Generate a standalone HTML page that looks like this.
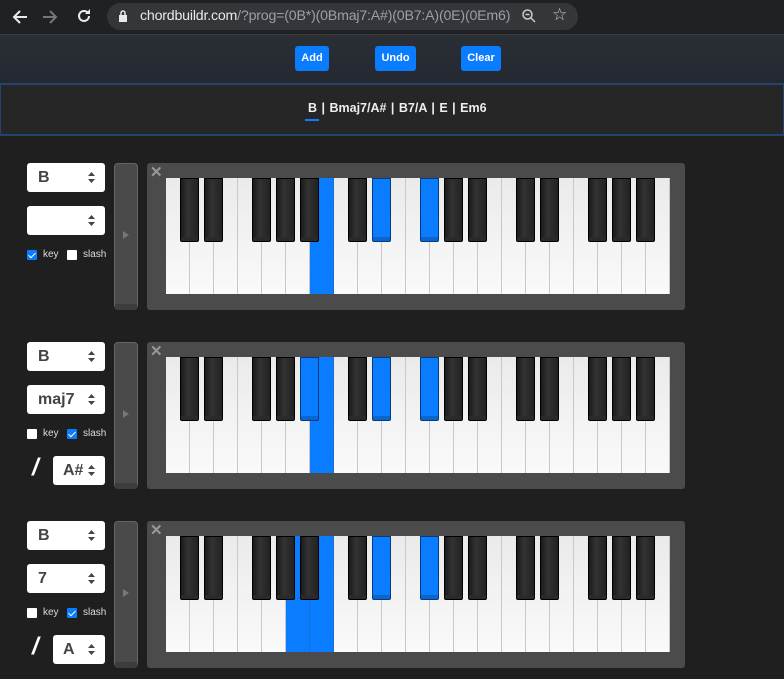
<!DOCTYPE html>
<html><head><meta charset="utf-8"><style>
*{box-sizing:border-box;margin:0;padding:0}
body{width:784px;height:679px;overflow:hidden;background:#1f1f1f;font-family:"Liberation Sans",sans-serif;position:relative}
.abs{position:absolute}
.chrome{left:0;top:0;width:784px;height:35px;background:#202124;border-bottom:1px solid #3c3c3c}
.url{left:107px;top:3px;width:471px;height:27px;border-radius:14px;background:#35363a;color:#e8eaed;font-size:14.2px;line-height:27px;padding-left:33px;letter-spacing:-0.2px}
.url span{color:#9aa0a6}
.hdr{left:0;top:35px;width:784px;height:48px;background:linear-gradient(#2a2f36,#242830)}
.btn{top:46px;height:25px;background:#0a7cff;color:#fff;font-size:11px;font-weight:bold;border-radius:3px;text-align:center;line-height:25px}
.strip{left:0;top:83px;width:784px;height:53px;background:#262626;border:2px solid #22446e;border-left:1px solid #22446e;border-right:1px solid #22446e}
.prog{left:308px;top:101px;color:#eee;font-size:12.5px;font-weight:bold;word-spacing:1px}
.sel{width:78px;height:29px;background:#fff;border-radius:3px;color:#444;font-size:16px;font-weight:bold;line-height:29px;padding-left:11px}
.sel svg{position:absolute;right:10px;top:9px}
.cb{width:10px;height:10px;background:#fff;border-radius:1px}
.cb.on{background:#0a7cff}
.cb.on:after{content:"";position:absolute;left:3px;top:1px;width:3px;height:6px;border:solid #fff;border-width:0 1.5px 1.5px 0;transform:rotate(45deg)}
.lbl{color:#ddd;font-size:10px}
.side{width:24px;height:147px;background:#4a4a4a;border:1px solid #666;border-radius:4px;border-bottom:6px solid #3d3d3d}
.side:after{content:"";position:absolute;left:8px;top:67px;border:4px solid transparent;border-left:6px solid #777}
.panel{width:538px;height:147px;background:#4b4b4b;border-radius:3px}
.x{color:#999;font-size:15px;font-weight:bold;left:3px;top:0px}
.kb{left:19px;top:15px;width:504px;height:116px;background:#f4f4f4;border-radius:0 0 3px 3px}
.w{top:0;width:24px;height:116px;background:linear-gradient(#eaeaea,#fafafa);border-right:1px solid #c8c8c8}
.w.hl{background:#0a7cff;border-right:1px solid #1a6fd0}
.b{top:0;width:19px;height:64px;background:linear-gradient(90deg,#1a1a1a,#333 40%,#222);border:1px solid #000;border-radius:0 0 2px 2px;box-shadow:inset 0 -4px 0 #2a2a2a}
.b.hl{background:#0a7cff;border-color:#063a7a;box-shadow:inset 0 -4px 0 #0866cc}
.slash{color:#fff;font-size:24px;font-weight:bold;font-style:italic}
</style></head><body>
<div class="abs chrome">
<svg class="abs" style="left:10px;top:8px" width="20" height="18" viewBox="0 0 20 18"><path d="M17 9H4M10 3L4 9l6 6" stroke="#e8eaed" stroke-width="2" fill="none"/></svg>
<svg class="abs" style="left:40px;top:8px" width="20" height="18" viewBox="0 0 20 18"><path d="M3 9h13M10 3l6 6-6 6" stroke="#75777a" stroke-width="2" fill="none"/></svg>
<svg class="abs" style="left:75px;top:7px" width="18" height="18" viewBox="0 0 18 18"><path d="M14 9a5 5 0 1 1-1.5-3.6" stroke="#e8eaed" stroke-width="2" fill="none"/><path d="M15 2v5h-5z" fill="#e8eaed"/></svg>
<div class="abs url">chordbuildr.com<span>/?prog=(0B*)(0Bmaj7:A#)(0B7:A)(0E)(0Em6)</span></div>
<svg class="abs" style="left:118px;top:10px" width="10" height="13" viewBox="0 0 10 13"><rect x="1" y="5" width="8" height="7" fill="#e8eaed"/><path d="M3 5V3a2 2 0 0 1 4 0v2" stroke="#e8eaed" stroke-width="1.5" fill="none"/></svg>
<svg class="abs" style="left:453px;top:8px;left:453px;display:none" width="1" height="1"></svg>
<svg class="abs" style="left:452px;top:8px;display:none" width="1" height="1"></svg>
<svg class="abs" style="left:453px;top:8px;display:none" width="1" height="1"></svg>
<svg class="abs" style="left:453px;top:8px;display:none" width="1" height="1"></svg>
<svg class="abs" style="left:453px;top:8px;display:none" width="1" height="1"></svg>
<svg class="abs" style="left:521px;top:8px" width="16" height="16" viewBox="0 0 16 16"><circle cx="6.5" cy="6.5" r="4.5" stroke="#ccc" stroke-width="1.5" fill="none"/><path d="M10 10l4 4M4.5 6.5h4" stroke="#ccc" stroke-width="1.5"/></svg>
<div class="abs" style="left:552px;top:5px;color:#ccc;font-size:17px">☆</div>
</div>
<div class="abs hdr"></div>
<div class="abs btn" style="left:295px;width:34px">Add</div>
<div class="abs btn" style="left:375px;width:41px">Undo</div>
<div class="abs btn" style="left:461px;width:40px">Clear</div>
<div class="abs strip"></div>
<div class="abs prog">B | Bmaj7/A# | B7/A | E | Em6</div>
<div class="abs" style="left:305px;top:119px;width:14px;height:2px;background:#0a7cff"></div>
<div id="rows"></div>
<script>
var rows=[
 {q:"",key:1,sl:0,bass:null,hw:[6],hb:[6,7]},
 {q:"maj7",key:0,sl:1,bass:"A#",hw:[6],hb:[4,6,7]},
 {q:"7",key:0,sl:1,bass:"A",hw:[5,6],hb:[6,7]}
];
var arr='<svg width="7" height="11" viewBox="0 0 7 11"><path d="M3.5 0L7 4H0z M3.5 11L7 7H0z" fill="#444"/></svg>';
var bo=[14,38,86,110,134];var h="";
rows.forEach(function(r,i){var y=163+i*179;
h+='<div class="abs sel" style="left:27px;top:'+y+'px">B'+arr+'</div>';
h+='<div class="abs sel" style="left:27px;top:'+(y+43)+'px">'+r.q+arr+'</div>';
h+='<div class="abs cb'+(r.key?' on':'')+'" style="left:27px;top:'+(y+87)+'px"></div><div class="abs lbl" style="left:43px;top:'+(y+86)+'px">key</div>';
h+='<div class="abs cb'+(r.sl?' on':'')+'" style="left:67px;top:'+(y+87)+'px"></div><div class="abs lbl" style="left:83px;top:'+(y+86)+'px">slash</div>';
if(r.bass){h+='<div class="abs slash" style="left:32px;top:'+(y+112)+'px">/</div><div class="abs sel" style="left:53px;top:'+(y+114)+'px;width:52px;padding-left:10px">'+r.bass+arr+'</div>';}
h+='<div class="abs side" style="left:114px;top:'+y+'px"></div>';
h+='<div class="abs panel" style="left:147px;top:'+y+'px"><div class="abs x">✕</div><div class="abs kb">';
for(var k=0;k<21;k++)h+='<div class="abs w'+(r.hw.indexOf(k)>=0?' hl':'')+'" style="left:'+(k*24)+'px"></div>';
var n=0;for(var o=0;o<3;o++)for(var j=0;j<5;j++){h+='<div class="abs b'+(r.hb.indexOf(n)>=0?' hl':'')+'" style="left:'+(o*168+bo[j])+'px"></div>';n++;}
h+='</div></div>';});
document.getElementById('rows').innerHTML=h;
</script>
</body></html>
